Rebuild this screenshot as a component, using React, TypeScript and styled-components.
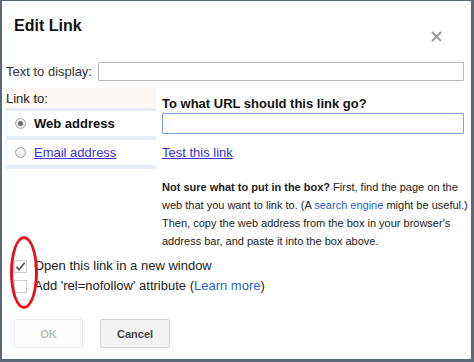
import React, { useState } from 'react';
import styled, { createGlobalStyle } from 'styled-components';

const GlobalStyle = createGlobalStyle`
  html, body {
    margin: 0;
    padding: 0;
    background: #ffffff;
  }
  body {
    font-family: 'Liberation Sans', Arial, sans-serif;
    color: #222;
  }
`;

const Frame = styled.div`
  position: relative;
  box-sizing: border-box;
  width: 474px;
  height: 362px;
  border-style: solid;
  border-color: #5b6879;
  border-width: 1px 3px 3px 2px;
  background: #fff;
  padding: 0 7px 0 4px;
  display: flex;
  flex-direction: column;
`;

const Header = styled.div`
  display: flex;
  justify-content: space-between;
  height: 60px;
`;

const Title = styled.h1`
  margin: 0;
  padding: 15px 0 0 8px;
  font-size: 16px;
  line-height: 20px;
  font-weight: bold;
  color: #111;
`;

const Close = styled.button`
  border: none;
  background: none;
  padding: 0;
  margin: 27px 20px 0 0;
  width: 16px;
  height: 16px;
  cursor: pointer;
  display: flex;
  align-items: center;
  justify-content: center;
`;

const FieldRow = styled.div`
  display: flex;
  align-items: center;
  gap: 6px;
  height: 20px;
`;

const Label = styled.label`
  font-size: 13px;
  color: #333;
  white-space: nowrap;
`;

const TextBox = styled.input<{ focused?: boolean }>`
  box-sizing: border-box;
  flex: 1;
  min-width: 0;
  height: ${(p) => (p.focused ? '21px' : '19px')};
  border: 1px solid ${(p) => (p.focused ? '#7ea6e0' : '#b9b9b9')};
  border-radius: 1px;
  outline: none;
  padding: 0 4px;
  font-family: inherit;
  font-size: 13px;
  box-shadow: ${(p) => (p.focused ? 'inset 0 0 1px #9bbbe8' : 'none')};
`;

const LinkSection = styled.div`
  display: flex;
  margin-top: 7px;
  gap: 6px;
`;

const SidePanel = styled.div`
  flex: 0 0 150px;
  box-sizing: border-box;
  display: flex;
  flex-direction: column;
`;

const SideHeader = styled.div`
  height: 20px;
  display: flex;
  align-items: center;
  font-size: 13px;
  color: #222;
  background: #fdf8f4;
  border-bottom: 3px solid #e8eef8;
`;

const Option = styled.label<{ selected?: boolean }>`
  display: flex;
  align-items: center;
  gap: 8px;
  height: 25px;
  padding-left: 8px;
  background: #fff;
  border-left: 1px solid #e8eef8;
  border-bottom: 4px solid #e8eef8;
  font-size: 13px;
  font-weight: ${(p) => (p.selected ? 'bold' : 'normal')};
  color: ${(p) => (p.selected ? '#111' : '#3b2fd6')};
  cursor: pointer;
`;

const OptionText = styled.span<{ link?: boolean }>`
  text-decoration: ${(p) => (p.link ? 'underline' : 'none')};
`;

const Radio = styled.span<{ checked?: boolean }>`
  box-sizing: border-box;
  width: 11px;
  height: 11px;
  border-radius: 50%;
  border: 1px solid #a9a9a9;
  background: radial-gradient(circle at 50% 40%, #fbfbfb, #dcdcdc);
  display: flex;
  align-items: center;
  justify-content: center;
  &::after {
    content: '';
    display: ${(p) => (p.checked ? 'block' : 'none')};
    width: 5px;
    height: 5px;
    border-radius: 50%;
    background: #6d6d6d;
  }
`;

const MainPanel = styled.div`
  flex: 1;
  min-width: 0;
  display: flex;
  flex-direction: column;
  padding-top: 8px;
`;

const Question = styled.div`
  font-size: 13px;
  font-weight: bold;
  color: #111;
  line-height: 15px;
  margin-bottom: 2px;
`;

const UrlRow = styled.div`
  display: flex;
`;

const TestLink = styled.a`
  align-self: flex-start;
  margin-top: 11px;
  font-size: 13px;
  color: #3b2fd6;
  text-decoration: underline;
  line-height: 15px;
`;

const Help = styled.p`
  margin: 18px 0 0 0;
  font-size: 11px;
  line-height: 18px;
  color: #222;
  white-space: nowrap;
`;

const HelpLink = styled.span`
  color: #2a62c9;
`;

const Checks = styled.div`
  display: flex;
  flex-direction: column;
  gap: 6px;
  margin-top: 9px;
  padding-left: 8px;
`;

const CheckRow = styled.label`
  display: flex;
  align-items: center;
  gap: 7px;
  font-size: 13px;
  line-height: 14px;
  color: #222;
`;

const Box = styled.span`
  box-sizing: border-box;
  width: 13px;
  height: 13px;
  border: 1px solid #cfcfcf;
  display: flex;
  align-items: center;
  justify-content: center;
`;

const Annotation = styled.div`
  position: absolute;
  left: 8px;
  top: 235px;
  width: 28px;
  height: 73px;
  box-sizing: border-box;
  border: 3px solid #e8101c;
  border-radius: 50%;
  pointer-events: none;
`;

const Buttons = styled.div`
  display: flex;
  gap: 17px;
  margin-top: 26px;
  padding-left: 8px;
`;

const Button = styled.button<{ disabled?: boolean }>`
  box-sizing: border-box;
  height: 29px;
  min-width: 69px;
  padding: 0 16px;
  border-radius: 2px;
  border: 1px solid ${(p) => (p.disabled ? '#ececec' : '#d4d4d4')};
  background: ${(p) => (p.disabled ? '#fdfdfd' : '#f3f3f3')};
  color: ${(p) => (p.disabled ? '#bbbbbb' : '#444')};
  font-family: inherit;
  font-size: 11px;
  font-weight: bold;
`;

const Check = () => (
  <svg width="12" height="11" viewBox="0 0 12 11">
    <path d="M1.5 6 L4.5 9 L10.5 1.5" fill="none" stroke="#555" strokeWidth="1.8" />
  </svg>
);

const App = () => {
  const [target, setTarget] = useState<'web' | 'email'>('web');

  return (
    <>
      <GlobalStyle />
      <Frame>
        <Header>
          <Title>Edit Link</Title>
          <Close aria-label="Close">
            <svg width="11" height="11" viewBox="0 0 11 11">
              <path d="M1 1 L10 10 M10 1 L1 10" stroke="#9a9a9a" strokeWidth="2" />
            </svg>
          </Close>
        </Header>
        <FieldRow>
          <Label>Text to display:</Label>
          <TextBox />
        </FieldRow>
        <LinkSection>
          <SidePanel>
            <SideHeader>Link to:</SideHeader>
            <Option selected={target === 'web'} onClick={() => setTarget('web')}>
              <Radio checked={target === 'web'} />
              <OptionText>Web address</OptionText>
            </Option>
            <Option selected={target === 'email'} onClick={() => setTarget('email')}>
              <Radio checked={target === 'email'} />
              <OptionText link={target !== 'email'}>Email address</OptionText>
            </Option>
          </SidePanel>
          <MainPanel>
            <Question>To what URL should this link go?</Question>
            <UrlRow>
              <TextBox focused />
            </UrlRow>
            <TestLink href="#">Test this link</TestLink>
            <Help>
              <b>Not sure what to put in the box?</b> First, find the page on the
              <br />
              web that you want to link to. (A <HelpLink>search engine</HelpLink> might be useful.)
              <br />
              Then, copy the web address from the box in your browser's
              <br />
              address bar, and paste it into the box above.
            </Help>
          </MainPanel>
        </LinkSection>
        <Checks>
          <CheckRow>
            <Box>
              <Check />
            </Box>
            Open this link in a new window
          </CheckRow>
          <CheckRow>
            <Box />
            <span>
              Add 'rel=nofollow' attribute (<HelpLink>Learn more</HelpLink>)
            </span>
          </CheckRow>
        </Checks>
        <Buttons>
          <Button disabled>OK</Button>
          <Button>Cancel</Button>
        </Buttons>
        <Annotation />
      </Frame>
    </>
  );
};

export default App;
